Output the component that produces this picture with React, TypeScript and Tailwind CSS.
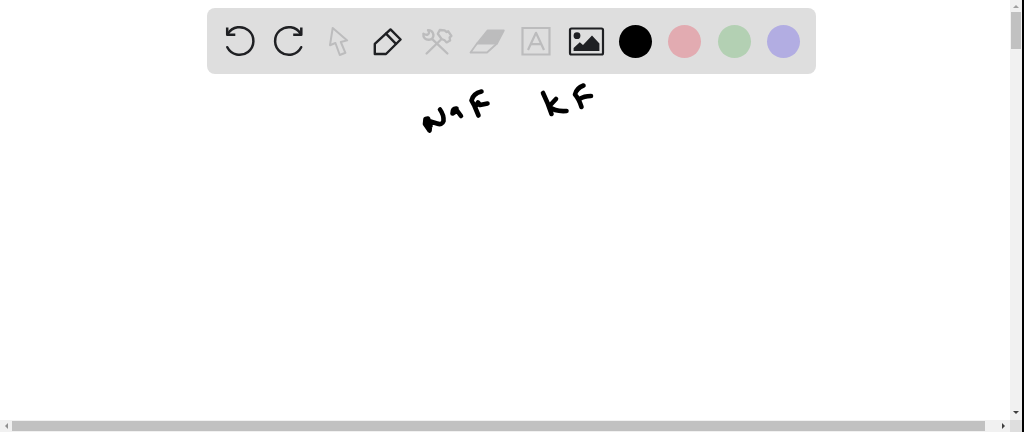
import type { ReactNode } from "react";

type Tool = { label: string; muted?: boolean; icon: ReactNode };

const tools: Tool[] = [
  {
    label: "Undo",
    icon: (
      <g strokeWidth="2.5">
        <path d="M4.8 8.8A13.8 13.8 0 1 1 4.3 22.2" />
        <path d="M4.2 2.5V9.8H12.3" strokeLinecap="butt" />
      </g>
    ),
  },
  {
    label: "Redo",
    icon: (
      <g strokeWidth="2.5">
        <path d="M28.7 8.8A13.8 13.8 0 1 0 29.2 22.2" />
        <path d="M29.3 2.5V9.8H21.2" strokeLinecap="butt" />
      </g>
    ),
  },
  {
    label: "Select",
    muted: true,
    icon: <path strokeWidth="2" d="M10.7 3L8 20.2L13.4 18L17.8 30L23.4 27.8L18.8 17L25.2 15.4Z" />,
  },
  {
    label: "Pen",
    icon: (
      <g strokeWidth="2.4">
        <path d="M3.8 29V18.8L19.5 4.4L29.6 14.5L15 29Z" />
        <path d="M15 8.7L25 18.8" />
      </g>
    ),
  },
  {
    label: "Tools",
    muted: true,
    icon: (
      <g strokeWidth="2.3">
        <path d="M7 5.2Q9.2 8 6.8 9.4Q5 10.4 2.4 8.6C1.8 12.4 4.4 15.4 9 14.6L11 13.8L26.4 28.5M11 13.8C14 10.6 12 5 7 5.2" />
        <path d="M5.6 28.5L20.6 14M16.8 8.8L18.8 5L23.6 5.4L25.6 7L27.1 6.2L30.4 11L28.6 12.4L29.1 15.5L25.6 17.4L23.6 15.2L20.6 14Z" />
      </g>
    ),
  },
  {
    label: "Eraser",
    muted: true,
    icon: (
      <g strokeWidth="1.8">
        <path d="M17.5 5.5H33.8L27 18.5H7Z" fill="currentColor" />
        <path d="M7 18.5L.5 27.5H17L27 18.5" />
      </g>
    ),
  },
  {
    label: "Text",
    muted: true,
    icon: (
      <g strokeWidth="2.2">
        <path d="M2.5 3H29.5V29.5H2.5Z" strokeLinejoin="miter" />
        <path d="M8 25L16 7.8L24 25M10.8 19.2H21.2" strokeLinecap="butt" />
      </g>
    ),
  },
  {
    label: "Image",
    icon: (
      <g>
        <rect x="1" y="3.5" width="33" height="26" rx="1.5" strokeWidth="2.2" />
        <circle cx="8" cy="10.7" r="3.4" fill="currentColor" stroke="none" />
        <path d="M4.6 26V23L10.8 17.2L14 20L23 10.6L30.4 18.6V26Z" fill="currentColor" stroke="none" />
      </g>
    ),
  },
];

const colors = [
  { label: "Black", className: "bg-black" },
  { label: "Red", className: "bg-[#e2abb1]" },
  { label: "Green", className: "bg-[#b3d0b3]" },
  { label: "Violet", className: "bg-[#b2ade2]" },
];

function Toolbar() {
  return (
    <div
      role="toolbar"
      aria-label="Drawing tools"
      className="flex h-[66px] w-[609px] max-w-full items-center justify-between rounded-lg bg-[#dedede] px-4"
    >
      {tools.map((tool) => (
        <button key={tool.label} type="button" aria-label={tool.label} className="size-[33px] shrink-0">
          <svg
            viewBox="0 0 33 33"
            fill="none"
            stroke="currentColor"
            strokeLinecap="round"
            strokeLinejoin="round"
            className={tool.muted ? "size-full overflow-visible text-[#bcbcbd]" : "size-full overflow-visible text-[#1f2023]"}
          >
            {tool.icon}
          </svg>
        </button>
      ))}
      {colors.map((color) => (
        <button
          key={color.label}
          type="button"
          aria-label={color.label}
          className={`size-[33px] shrink-0 rounded-full ${color.className}`}
        />
      ))}
    </div>
  );
}

function Ink() {
  return (
    <svg
      role="img"
      aria-label="NaF KF"
      viewBox="1 0 200 60"
      className="h-[60px] w-[200px]"
      fill="none"
      stroke="#000"
      strokeWidth="4.6"
      strokeLinecap="round"
      strokeLinejoin="round"
    >
      <path d="M18.5 50.5L14 44L14.5 39L17 38.5L19.5 46M18.5 50.5L19.5 41.5L26 43.5Q31 45.5 32.5 41Q33 35 29 29.5" />
      <path d="M45.5 28.5Q41.5 28 41.5 33.5L46 30.5L50 36" />
      <path d="M70.5 11.5Q62 13.5 60.5 20.5L63.5 26L67.5 35.5M64.5 26.5L67 22.5L69 25L76.5 23.5" />
      <path d="M132 13L136.5 23L140.5 34M145 19L138 26.5Q144.5 32 155.5 31" />
      <path d="M172.5 5.5Q165.5 8 164 14.5Q168 19 170.5 27M168.5 19Q173 16 180 16" />
    </svg>
  );
}

function Arrow({ d }: { d: string }) {
  return (
    <svg viewBox="0 0 12 12" className="size-3 shrink-0 fill-current" aria-hidden="true">
      <path d={d} />
    </svg>
  );
}

export default function App() {
  return (
    <div className="grid h-screen grid-cols-[1fr_12px] grid-rows-[1fr_12px] overflow-hidden border-r-2 border-black bg-white">
      <main className="flex min-w-0 flex-col items-center gap-[6px] overflow-hidden pt-2 pl-[13px]">
        <Toolbar />
        <Ink />
      </main>
      <div className="flex flex-col items-center bg-[#f1f1f1]">
        <button type="button" aria-label="Scroll up" className="text-[#a0a0a0]">
          <Arrow d="M3 8L6 5L9 8Z" />
        </button>
        <div className="h-[37px] w-[10px] bg-[#c1c1c1]" />
        <button type="button" aria-label="Scroll down" className="mt-auto text-[#404040]">
          <Arrow d="M3 3L6 6L9 3Z" />
        </button>
      </div>
      <div className="flex items-center bg-[#f1f1f1]">
        <button type="button" aria-label="Scroll left" className="text-[#909090]">
          <Arrow d="M8 3L5 6L8 9Z" />
        </button>
        <div className="mr-[13px] h-[10px] grow bg-[#c1c1c1]" />
        <button type="button" aria-label="Scroll right" className="text-[#404040]">
          <Arrow d="M4 3L7 6L4 9Z" />
        </button>
      </div>
      <div className="bg-[#dedede]" />
    </div>
  );
}
